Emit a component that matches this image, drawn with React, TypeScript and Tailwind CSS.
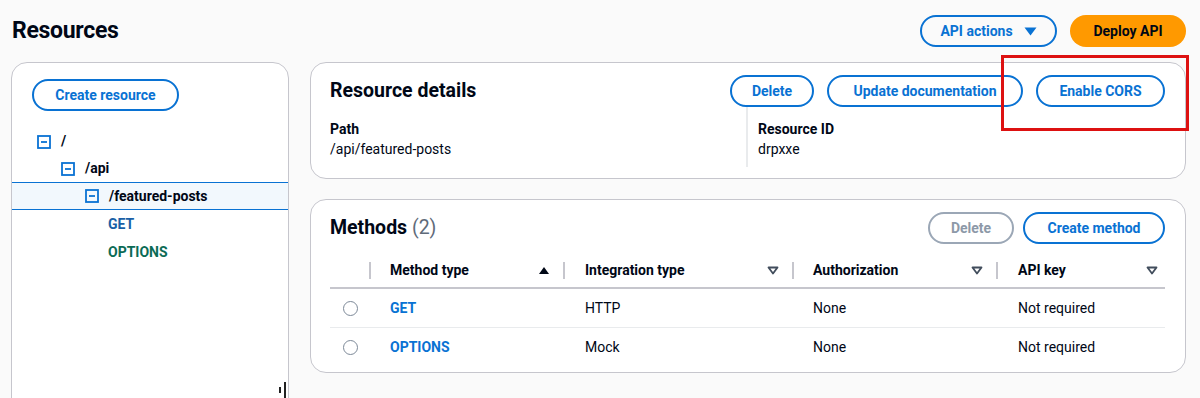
import React from "react";

function TreeIcon() {
  return (
    <svg width="14" height="14" viewBox="0 0 14 14" className="shrink-0">
      <rect x="1" y="1" width="12" height="12" fill="none" stroke="#0972d3" strokeWidth="1.8" />
      <line x1="4" y1="7" x2="10" y2="7" stroke="#0972d3" strokeWidth="1.8" />
    </svg>
  );
}

function SortDown() {
  return (
    <svg width="12" height="9" viewBox="0 0 12 9" className="shrink-0">
      <path d="M1.5 1.5 L10.5 1.5 L6 7.5 Z" fill="none" stroke="#414d5c" strokeWidth="1.8" strokeLinejoin="round" />
    </svg>
  );
}

function SortUp() {
  return (
    <svg width="12" height="9" viewBox="0 0 12 9" className="shrink-0">
      <path d="M1 8 L11 8 L6 1 Z" fill="#000716" />
    </svg>
  );
}

function Radio() {
  return <div className="w-[15px] h-[15px] rounded-full border-[1.5px] border-[#7d8998] bg-white" />;
}

export default function App() {
  const font = { fontFamily: "Roboto, 'Open Sans', sans-serif" };
  return (
    <div className="relative w-[1200px] h-[398px] overflow-hidden bg-[#fafafa] text-[#000716]" style={font}>
      {/* Header */}
      <div className="flex items-start justify-between pl-3 pr-[14px] pt-[15px] h-[47px]">
        <h1 className="text-[23px] font-bold leading-[32px] tracking-[-0.3px]">Resources</h1>
        <div className="flex gap-[13px]">
          <button className="flex items-center justify-center gap-[11px] w-[137px] h-[32px] rounded-full border-2 border-[#0972d3] text-[#0972d3] text-[14px] font-bold">
            <span>API actions</span>
            <svg width="13" height="9" viewBox="0 0 13 9">
              <path d="M0.5 0.5 L12.5 0.5 L6.5 8.5 Z" fill="#0972d3" />
            </svg>
          </button>
          <button className="flex items-center justify-center w-[116px] h-[32px] rounded-full bg-[#ff9900] text-[#000716] text-[14px] font-bold">
            Deploy API
          </button>
        </div>
      </div>

      <div className="flex gap-[21px] pl-[11px] pr-[14px] mt-[15px]">
        {/* Left tree panel */}
        <aside className="relative w-[278px] h-[350px] shrink-0 rounded-t-[16px] border border-[#c6c6cd] bg-white">
          <div className="pt-4 pl-5">
            <button className="flex items-center justify-center w-[147px] h-[32px] rounded-full border-2 border-[#0972d3] text-[#0972d3] text-[14px] font-bold">
              Create resource
            </button>
          </div>
          <div className="mt-[17px] flex flex-col text-[14px] font-bold">
            <div className="flex items-center gap-[10px] h-[27px] pl-[25px]">
              <TreeIcon />
              <span>/</span>
            </div>
            <div className="flex items-center gap-[10px] h-[27px] pl-[49px]">
              <TreeIcon />
              <span>/api</span>
            </div>
            <div className="flex items-center gap-[10px] h-[28px] pl-[73px] border-y border-[#0972d3] bg-[#f2f8fd]">
              <TreeIcon />
              <span>/featured-posts</span>
            </div>
            <div className="flex items-center h-[29px] pl-[96px] text-[#1a5fa6]">GET</div>
            <div className="flex items-center h-[26px] pl-[96px] text-[#0b6b55]">OPTIONS</div>
          </div>
          <div className="absolute left-[267px] top-[324px] w-[2px] h-[6px] bg-[#222]" />
          <div className="absolute left-[272px] top-[319px] w-[2px] h-[16px] bg-[#222]" />
        </aside>

        {/* Right column */}
        <div className="flex-1 flex flex-col gap-[20px]">
          {/* Resource details */}
          <section className="h-[117px] rounded-[16px] border border-[#c6c6cd] bg-white pl-[19px] pr-[20px] pt-[12px]">
            <div className="flex items-center justify-between h-[32px]">
              <h2 className="text-[19.5px] font-bold">Resource details</h2>
              <div className="flex gap-[13px]">
                <button className="w-[84px] h-[32px] rounded-full border-2 border-[#0972d3] text-[#0972d3] text-[14px] font-bold">Delete</button>
                <button className="w-[196px] h-[32px] rounded-full border-2 border-[#0972d3] text-[#0972d3] text-[14px] font-bold">Update documentation</button>
                <button className="w-[129px] h-[32px] rounded-full border-2 border-[#0972d3] text-[#0972d3] text-[14px] font-bold">Enable CORS</button>
              </div>
            </div>
            <div className="flex h-[60px]">
              <div className="w-[416px] pt-[12px] text-[14px] leading-[20px]">
                <div className="font-bold">Path</div>
                <div>/api/featured-posts</div>
              </div>
              <div className="border-l-2 border-[#e9ebed] pl-[10px] pt-[12px] text-[14px] leading-[20px]">
                <div className="font-bold">Resource ID</div>
                <div>drpxxe</div>
              </div>
            </div>
          </section>

          {/* Methods */}
          <section className="h-[174px] rounded-[16px] border border-[#c6c6cd] bg-white pl-[19px] pr-[20px] pt-[12px]">
            <div className="flex items-center justify-between h-[32px]">
              <h2 className="text-[19.5px] font-bold">
                Methods <span className="font-normal text-[#5f6b7a]">(2)</span>
              </h2>
              <div className="flex gap-[9px]">
                <button className="w-[86px] h-[32px] rounded-full border-2 border-[#9ba7b6] text-[#8d99a8] text-[14px] font-bold">Delete</button>
                <button className="w-[142px] h-[32px] rounded-full border-2 border-[#0972d3] text-[#0972d3] text-[14px] font-bold">Create method</button>
              </div>
            </div>
            <div className="mt-[9px] text-[14px]">
              <div className="grid grid-cols-[39px_194px_229px_204px_1fr] h-[36px] border-b-2 border-[#c6c6cd] font-bold">
                <div />
                <div className="flex items-center">
                  <div className="w-[2px] h-[17px] bg-[#c6c6cd]" />
                  <span className="ml-[19px]">Method type</span>
                  <span className="ml-auto mr-[13px]"><SortUp /></span>
                </div>
                <div className="flex items-center">
                  <div className="w-[2px] h-[17px] bg-[#c6c6cd]" />
                  <span className="ml-[20px]">Integration type</span>
                  <span className="ml-auto mr-[13px]"><SortDown /></span>
                </div>
                <div className="flex items-center">
                  <div className="w-[2px] h-[17px] bg-[#c6c6cd]" />
                  <span className="ml-[19px]">Authorization</span>
                  <span className="ml-auto mr-[13px]"><SortDown /></span>
                </div>
                <div className="flex items-center">
                  <div className="w-[2px] h-[17px] bg-[#c6c6cd]" />
                  <span className="ml-[20px]">API key</span>
                  <span className="ml-auto mr-[7px]"><SortDown /></span>
                </div>
              </div>
              <div className="grid grid-cols-[39px_194px_229px_204px_1fr] h-[39px] border-b border-[#e9ebed] items-center">
                <div className="pl-[13px]"><Radio /></div>
                <div className="pl-[21px] font-bold text-[#0972d3]">GET</div>
                <div className="pl-[22px]">HTTP</div>
                <div className="pl-[21px]">None</div>
                <div className="pl-[22px]">Not required</div>
              </div>
              <div className="grid grid-cols-[39px_194px_229px_204px_1fr] h-[39px] items-center">
                <div className="pl-[13px]"><Radio /></div>
                <div className="pl-[21px] font-bold text-[#0972d3]">OPTIONS</div>
                <div className="pl-[22px]">Mock</div>
                <div className="pl-[21px]">None</div>
                <div className="pl-[22px]">Not required</div>
              </div>
            </div>
          </section>
        </div>
      </div>

      {/* Red annotation box */}
      <div className="absolute left-[1001px] top-[55px] w-[188px] h-[76px] border-[3px] border-[#dd1111]" />
    </div>
  );
}
